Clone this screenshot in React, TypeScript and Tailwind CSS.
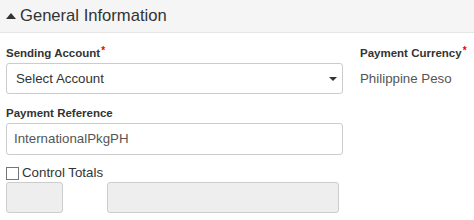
import React from "react";

const font = { fontFamily: '"Liberation Sans", Arial, sans-serif' };

function Label({ text, required }: { text: string; required?: boolean }) {
  return (
    <div className="flex h-[15px] items-start text-[11.5px] font-bold leading-[15px] text-[#333]">
      {text}
      {required && <span className="ml-[1px] text-[10px] leading-[10px] text-[#e00]">*</span>}
    </div>
  );
}

export default function App() {
  return (
    <div className="h-[220px] w-[474px] overflow-hidden bg-white" style={font}>
      {/* section header */}
      <div className="flex h-[33px] items-center border-b border-[#e6e6e6] bg-[#f5f5f5] pl-[6px]">
        <svg width="10" height="6" viewBox="0 0 10 6" className="mr-[4px] mt-[-1px]">
          <path d="M0 6 L5 0 L10 6 Z" fill="#333" />
        </svg>
        <span className="text-[16.6px] leading-none text-[#333]">General Information</span>
      </div>

      <div className="flex pl-[6px] pt-[13px]">
        <div className="flex w-[337px] flex-col">
          <Label text="Sending Account" required />
          <div className="mt-[2px] flex h-[31px] items-center justify-between rounded-[3px] border border-[#ccc] bg-white pl-[9px] pr-[5px]">
            <span className="text-[13.3px] text-[#333]">Select Account</span>
            <svg width="8" height="4" viewBox="0 0 8 4">
              <path d="M0 0 L8 0 L4 4 Z" fill="#333" />
            </svg>
          </div>

          <div className="mt-[12px]">
            <Label text="Payment Reference" />
          </div>
          <div className="mt-[2px] flex h-[32px] items-center rounded-[3px] border border-[#ccc] bg-white pl-[7px]">
            <span className="text-[13.3px] text-[#555]">InternationalPkgPH</span>
          </div>

          <div className="mt-[10px] flex h-[16px] items-center">
            <div className="h-[13px] w-[13px] border border-[#767676] bg-white" />
            <span className="ml-[3px] text-[13.3px] text-[#333]">Control Totals</span>
          </div>
          <div className="mt-[1px] flex">
            <div className="h-[31px] w-[57px] rounded-[3px] border border-[#ccc] bg-[#eee]" />
            <div className="ml-[44px] h-[31px] w-[232px] rounded-[3px] border border-[#ccc] bg-[#eee]" />
          </div>
        </div>

        <div className="ml-[17px] flex flex-col pt-[0px]">
          <Label text="Payment Currency" required />
          <div className="mt-[8px] text-[13.3px] text-[#555]">Philippine Peso</div>
        </div>
      </div>
    </div>
  );
}
